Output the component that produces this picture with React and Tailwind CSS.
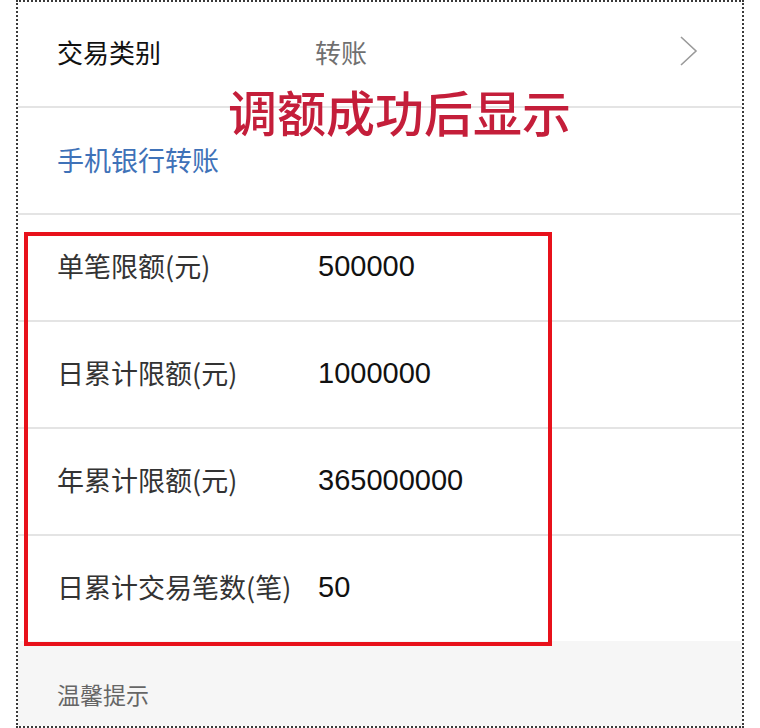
export default function App() {
  const limits = [
    { label: "单笔限额(元)", value: "500000" },
    { label: "日累计限额(元)", value: "1000000" },
    { label: "年累计限额(元)", value: "365000000" },
    { label: "日累计交易笔数(笔)", value: "50" },
  ];

  return (
    <div className="w-[760px] h-[728px] bg-white font-['Noto_Sans_CJK_SC','Noto_Sans',sans-serif]">
      <div className="relative ml-[16px] w-[728px] h-[728px] border-2 border-dotted border-[#3a3a3a] flex flex-col">
        {/* Transaction type */}
        <div className="h-[106px] shrink-0 flex items-center pl-[39px] pr-[44px] pb-[6px] border-b-2 border-[#e4e4e4]">
          <span className="w-[258px] text-[26px] text-[#111]">交易类别</span>
          <span className="flex-1 text-[26px] text-[#707070]">转账</span>
          <svg width="18" height="30" viewBox="0 0 18 30" fill="none" stroke="#9a9a9a" strokeWidth="1.6">
            <path d="M1 1 L16 15 L1 29" />
          </svg>
        </div>

        {/* Channel */}
        <div className="h-[107px] shrink-0 flex items-center pl-[39px] border-b-2 border-[#e4e4e4]">
          <span className="text-[27px] text-[#3f72b8]">手机银行转账</span>
        </div>

        {/* Limits */}
        {limits.map((row, i) => (
          <div
            key={row.label}
            className={
              i < limits.length - 1
                ? "h-[107px] shrink-0 flex items-center pl-[39px] pb-[2px] border-b-2 border-[#e4e4e4]"
                : "h-[105px] shrink-0 flex items-center pl-[39px] pb-[2px]"
            }
          >
            <span className="w-[261px] text-[27px] text-[#333]">{row.label}</span>
            <span className="text-[29px] text-[#111] font-['Liberation_Sans',sans-serif]">{row.value}</span>
          </div>
        ))}

        {/* Tips */}
        <div className="flex-1 bg-[#f6f6f6] flex items-center pl-[39px] pt-[22px]">
          <span className="text-[23px] text-[#666]">温馨提示</span>
        </div>

        {/* Annotation overlay */}
        <div className="absolute left-[210px] top-[84px] text-[49px] leading-none font-medium text-[#c41e3a] whitespace-nowrap">
          调额成功后显示
        </div>
        <div className="absolute left-[6px] top-[230px] w-[528px] h-[414px] border-4 border-[#e8111b] pointer-events-none" />
      </div>
    </div>
  );
}
